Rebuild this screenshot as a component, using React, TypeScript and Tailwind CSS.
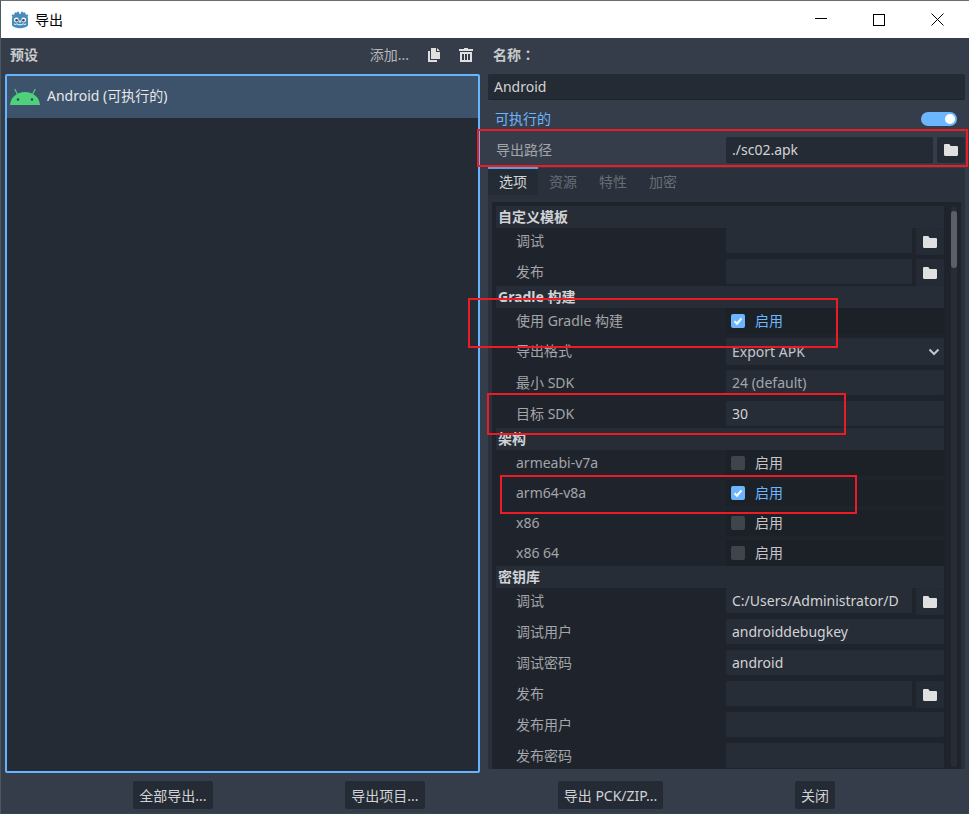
import type { ReactNode } from "react"

const FONT = "font-['Noto_Sans','Noto_Sans_CJK_SC',sans-serif]"

function FolderIcon() {
  return (
    <svg width="14" height="12" viewBox="0 0 14 12" className="fill-[#e0e0e0]">
      <path d="M0 1.2C0 .5.5 0 1.2 0h3.6c.5 0 .8.2 1 .6L6.6 2h6.2c.7 0 1.2.5 1.2 1.2v7.6c0 .7-.5 1.2-1.2 1.2H1.2C.5 12 0 11.500 0 10.800z" />
    </svg>
  )
}

function CopyIcon() {
  return (
    <svg width="13" height="14" viewBox="0 0 13 14" className="fill-[#e0e0e0]">
      <path d="M3 0h5v4h4v7H3z" />
      <path d="M9 0l3 3H9z" />
      <path d="M0 3h2v9h7v2H0z" />
    </svg>
  )
}

function TrashIcon() {
  return (
    <svg width="14" height="14" viewBox="0 0 14 14" className="fill-[#e0e0e0]">
      <path d="M5 0h4v1h5v2H0V1h5z" />
      <path d="M1 4h12v10H1zm2 2v6h2V6zm3 0v6h2V6zm3 0v6h2V6z" fillRule="evenodd" />
    </svg>
  )
}

function GodotIcon() {
  return (
    <svg width="18" height="18" viewBox="0 0 18 18">
      <path
        d="M6.700.5l-1 1.300-1.200-.6L3.300 2.500V4L1.800 3.200.6 4.500l1 1.600L1 7v7.500c2 1.700 4.500 2.700 8 2.700s6-1 8-2.700V7l-.6-.9 1-1.600-1.200-1.300-1.500.8V2.500l-1.200-1.300-1.200.6-1-1.300-1.400.5v1.800H8.100V1z"
        fill="#478cbf"
      />
      <circle cx="5.300" cy="9" r="2.400" fill="#fff" />
      <circle cx="12.700" cy="9" r="2.400" fill="#fff" />
      <circle cx="5.600" cy="9.200" r="1.300" fill="#414042" />
      <circle cx="12.400" cy="9.200" r="1.300" fill="#414042" />
      <path d="M8.200 9.500h1.600v2H8.200zM3 12.500c1.500.8 2.300.5 3-.2.700 1 1.600 1 3 1s2.300 0 3-1c.7.700 1.500 1 3 .2v1c-1.500.5-2.500.3-3-.2-.7.800-1.600 1-3 1s-2.300-.2-3-1c-.5.500-1.500.7-3 .2z" fill="#fff" />
    </svg>
  )
}

function AndroidIcon() {
  return (
    <svg width="30" height="18" viewBox="0 0 30 18" className="mb-[2px]">
      <path d="M0 18C.6 10.500 6.500 5 15 5s14.400 5.500 15 13z" fill="#4fd07a" />
      <path d="M7.500 7.500 5 2.500M22.500 7.500 25 2.500" stroke="#4fd07a" strokeWidth="1.200" strokeLinecap="round" />
      <circle cx="8" cy="12.500" r="1.200" fill="#2a4a4a" />
      <circle cx="22" cy="12.500" r="1.200" fill="#2a4a4a" />
    </svg>
  )
}

function Checkbox({ on }: { on?: boolean }) {
  return on ? (
    <span className="flex h-[14px] w-[14px] items-center justify-center rounded-[2px] bg-[#6bb6ff]">
      <svg width="10" height="10" viewBox="0 0 10 10">
        <path d="M1.500 5.200 4 7.700 8.500 2.300" stroke="#fff" strokeWidth="2" fill="none" />
      </svg>
    </span>
  ) : (
    <span className="h-[14px] w-[14px] rounded-[2px] bg-[#3f444d]" />
  )
}

function Section({ title }: { title: string }) {
  return (
    <div className="flex h-[22px] items-center bg-[#272d37] pl-[2px] font-bold leading-[20px] text-[#d0d2d5]">
      {title}
    </div>
  )
}

// one inspector line: name on the left, editor from x=726 on the right
function Row({ label, children, className }: { label: string; children: ReactNode; className: string }) {
  return (
    <div className={`flex ${className}`}>
      <div className="w-[230px] shrink-0 pl-[20px] pt-[2px] leading-[22px] text-[#a3a5aa]">{label}</div>
      <div className="min-w-0 flex-1">{children}</div>
    </div>
  )
}

function TextValue({ value, dim }: { value?: string; dim?: boolean }) {
  return (
    <div
      className={`flex h-[25px] items-center rounded-[2px] bg-[#272d37] pl-[6px] ${dim ? "text-[#a3a5aa]" : "text-[#d2d3d6]"}`}
    >
      {value}
    </div>
  )
}

function PathValue({ value }: { value?: string }) {
  return (
    <div className="flex gap-[4px]">
      <div className="flex h-[25px] flex-1 items-center rounded-[2px] bg-[#272d37] pl-[6px] text-[#d2d3d6]">{value}</div>
      <div className="flex h-[27px] w-[28px] items-center justify-center rounded-[2px] bg-[#252b34]">
        <FolderIcon />
      </div>
    </div>
  )
}

function CheckValue({ on }: { on?: boolean }) {
  return (
    <div className="flex h-[26px] items-center gap-[9px] rounded-[2px] bg-[#1c2027] pl-[5px]">
      <Checkbox on={on} />
      <span className={`-translate-y-px translate-x-px ${on ? "text-[#6bb6ff]" : "text-[#c4c5c8]"}`}>启用</span>
    </div>
  )
}

function FooterButton({ children, className }: { children: ReactNode; className: string }) {
  return (
    <button className={`flex h-[28px] items-center justify-center rounded-[2px] bg-[#252b34] text-[#d0d2d5] ${className}`}>
      {children}
    </button>
  )
}

function Marker({ className }: { className: string }) {
  return <div className={`pointer-events-none absolute border-2 border-[#ed1c24] ${className}`} />
}

export default function App() {
  return (
    <div className={`relative flex h-[814px] w-[969px] flex-col overflow-hidden border-b border-l border-t border-b-[#2f4a4f] border-l-[#4a5a60] border-t-[#6e6e6e] bg-[#363d4a] text-[14px] ${FONT}`}>
      {/* window title bar */}
      <div className="flex h-[37px] shrink-0 items-center bg-white pl-[10px] text-black">
        <GodotIcon />
        <span className="ml-[6px]">导出</span>
        <div className="ml-auto mr-[3px] flex h-full items-center">
          <div className="flex w-[58px] justify-center">
            <div className="mb-[2px] h-px w-[12px] bg-black" />
          </div>
          <div className="flex w-[58px] justify-center">
            <div className="h-[12px] w-[12px] border border-black" />
          </div>
          <div className="flex w-[58px] justify-center">
            <svg width="13" height="13" viewBox="0 0 13 13">
              <path d="M.5.5l12 12M12.500.5l-12 12" stroke="#000" fill="none" />
            </svg>
          </div>
        </div>
      </div>

      <div className="flex h-[735px] shrink-0 gap-[8px] pl-[4px] pr-[4px]">
        {/* presets */}
        <div className="flex w-[475px] shrink-0 flex-col">
          <div className="flex h-[36px] shrink-0 items-center justify-between pb-[3px] pl-[5px] pr-[7px]">
            <span className="font-bold text-[#c9cbce]">预设</span>
            <div className="flex items-center">
              <span className="mr-[19px] text-[#b5b7bb]">添加...</span>
              <span className="mr-[18px] flex"><CopyIcon /></span>
              <TrashIcon />
            </div>
          </div>
          <div className="h-[699px] rounded-[2px] border-2 border-[#66b3ff] bg-[#252b34]">
            <div className="flex h-[42px] items-center gap-[7px] bg-[#3d536b] pl-[3px] text-[#e6e7e9]">
              <AndroidIcon />
              <span className="pb-[4px]">Android (可执行的)</span>
            </div>
          </div>
        </div>

        {/* selected preset */}
        <div className="flex min-w-0 flex-1 flex-col">
          <div className="flex h-[36px] shrink-0 items-center pb-[3px] pl-[5px] font-bold text-[#c9cbce]">
            名称<span className="font-['Noto_Sans_CJK_TC',sans-serif]">：</span>
          </div>
          <div className="flex h-[26px] shrink-0 items-center rounded-[2px] border-b border-[#1f242c] bg-[#252b34] pb-px pl-[6px] text-[#d2d3d6]">Android</div>
          <div className="flex h-[37px] shrink-0 items-center justify-between pl-[7px] pr-[7px]">
            <span className="text-[#6bb6ff]">可执行的</span>
            <span className="mr-px flex h-[14px] w-[36px] items-center justify-end rounded-full bg-[#6bb6ff] pr-[2px]">
              <span className="h-[10px] w-[10px] rounded-full bg-white" />
            </span>
          </div>
          <div className="flex h-[26px] shrink-0">
            <div className="w-[238px] pl-[8px] leading-[26px] text-[#a3a5aa]">导出路径</div>
            <div className="flex flex-1 gap-[4px]">
              <div className="flex flex-1 items-center rounded-[2px] border-b border-[#1f242c] bg-[#252b34] pl-[6px] text-[#d2d3d6]">./sc02.apk</div>
              <div className="flex w-[28px] items-center justify-center rounded-[2px] bg-[#252b34]">
                <FolderIcon />
              </div>
            </div>
          </div>

          {/* tabs */}
          <div className="mt-[5px] flex h-[28px] shrink-0 items-center bg-[#2b313c] pb-[2px] text-[#686d75]">
            <div className="flex h-[28px] w-[50px] items-center justify-center border-t-2 border-[#5a9fd8] bg-[#252b34] pb-[2px] text-[#d2d3d6]">选项</div>
            <div className="w-[50px] text-center">资源</div>
            <div className="w-[50px] text-center">特性</div>
            <div className="w-[50px] text-center">加密</div>
          </div>

          <div className="h-[573px] shrink-0 overflow-hidden bg-[#2b313c] px-[4px] pt-[6px]">
            <div className="flex h-[567px] gap-[7px] overflow-hidden bg-[#1f242c] pl-[4px] pr-[3px] pt-[4px]">
              <div className="w-[448px] shrink-0">
                <Section title="自定义模板" />
                <Row label="调试" className="h-[31px]"><PathValue /></Row>
                <Row label="发布" className="h-[27px]"><PathValue /></Row>
                <Section title="Gradle 构建" />
                <Row label="使用 Gradle 构建" className="h-[30px]"><CheckValue on /></Row>
                <Row label="导出格式" className="h-[32px]">
                  <div className="flex h-[27px] items-center justify-between rounded-[2px] bg-[#272d37] pl-[6px] pr-[4px] text-[#c4c5c8]">
                    Export APK
                    <svg width="12" height="8" viewBox="0 0 12 8"><path d="M1.500 1.500 6 6l4.500-4.500" stroke="#c4c5c8" strokeWidth="2" fill="none" /></svg>
                  </div>
                </Row>
                <Row label="最小 SDK" className="h-[31px]"><TextValue value="24 (default)" dim /></Row>
                <Row label="目标 SDK" className="h-[27px]"><TextValue value="30" /></Row>
                <Section title="架构" />
                <Row label="armeabi-v7a" className="h-[30px]"><CheckValue /></Row>
                <Row label="arm64-v8a" className="h-[30px]"><CheckValue on /></Row>
                <Row label="x86" className="h-[30px]"><CheckValue /></Row>
                <Row label="x86 64" className="h-[26px]"><CheckValue /></Row>
                <Section title="密钥库" />
                <Row label="调试" className="h-[31px]"><PathValue value="C:/Users/Administrator/D" /></Row>
                <Row label="调试用户" className="h-[31px]"><TextValue value="androiddebugkey" /></Row>
                <Row label="调试密码" className="h-[31px]"><TextValue value="android" /></Row>
                <Row label="发布" className="h-[31px]"><PathValue /></Row>
                <Row label="发布用户" className="h-[31px]"><TextValue /></Row>
                <Row label="发布密码" className="h-[26px]"><TextValue /></Row>
              </div>
              {/* scrollbar */}
              <div className="relative mb-[2px] w-[6px] rounded-full bg-[#272d37]">
                <div className="absolute left-0 top-[5px] h-[57px] w-[6px] rounded-full bg-[#5a6069]" />
              </div>
            </div>
          </div>
        </div>
      </div>

      {/* footer buttons */}
      <div className="flex min-h-0 flex-1 items-start pl-[132px] pt-[8px]">
        <FooterButton className="w-[80px]">全部导出...</FooterButton>
        <FooterButton className="ml-[132px] w-[80px]">导出项目...</FooterButton>
        <FooterButton className="ml-[133px] w-[105px]">导出 PCK/ZIP...</FooterButton>
        <FooterButton className="ml-[132px] w-[40px]">关闭</FooterButton>
      </div>

      {/* red annotations drawn on top of the screenshot */}
      <Marker className="left-[476px] top-[128px] h-[38px] w-[491px]" />
      <Marker className="left-[467px] top-[297px] h-[50px] w-[370px]" />
      <Marker className="left-[486px] top-[392px] h-[42px] w-[359px]" />
      <Marker className="left-[499px] top-[474px] h-[39px] w-[357px]" />
    </div>
  )
}
